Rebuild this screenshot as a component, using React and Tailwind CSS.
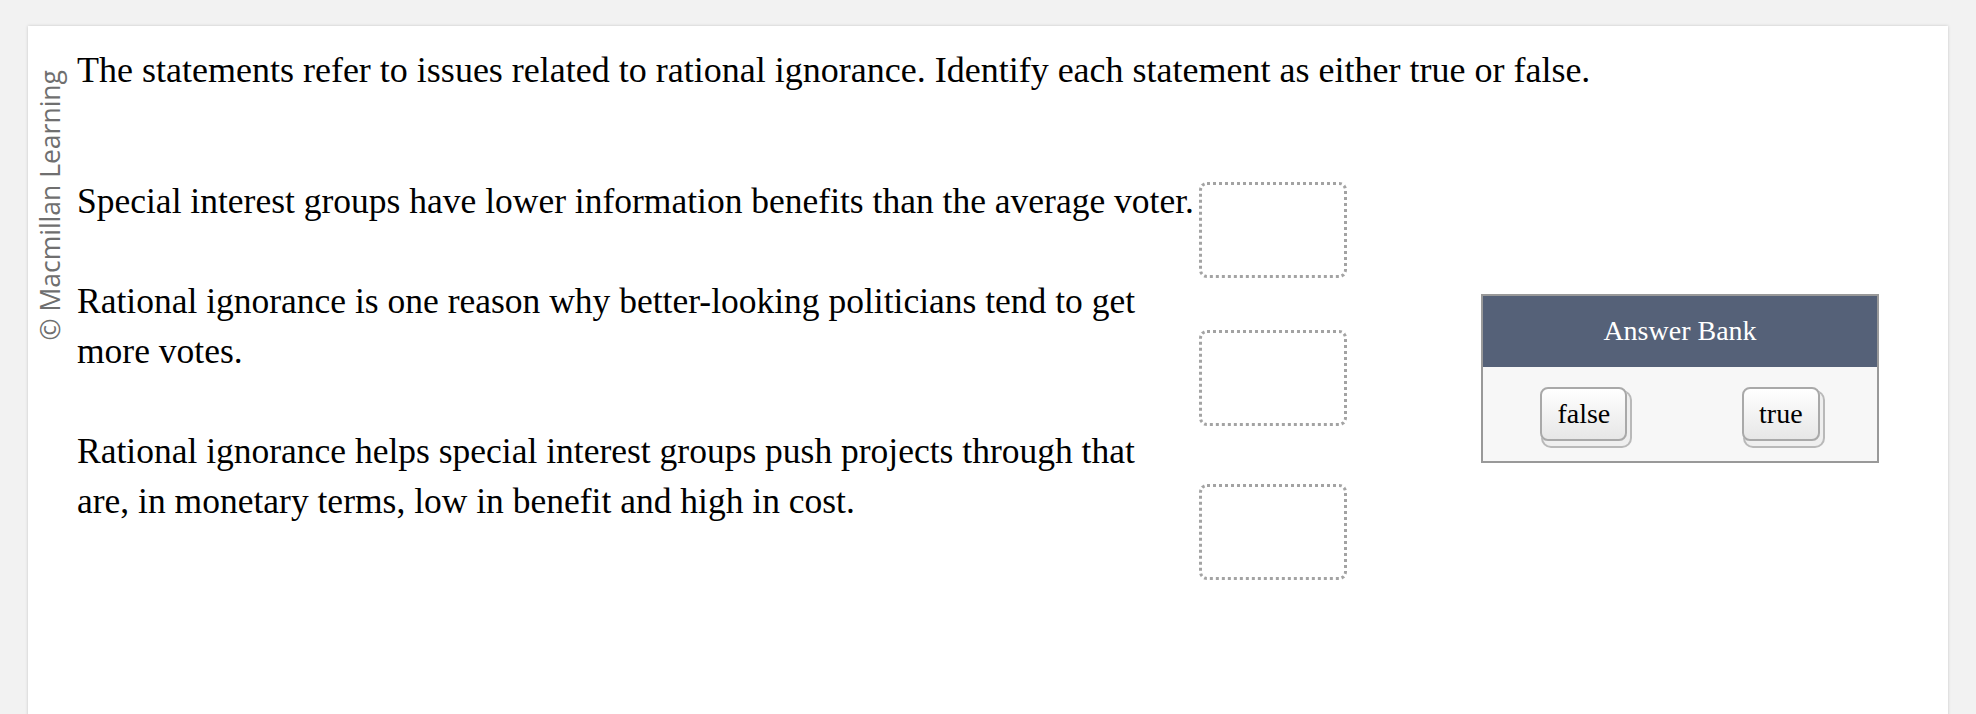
import React from 'react';

const STATEMENTS = [
  { text: 'Special interest groups have lower information benefits than the average voter.', nowrap: true },
  { text: 'Rational ignorance is one reason why better-looking politicians tend to get more votes.' },
  { text: 'Rational ignorance helps special interest groups push projects through that are, in monetary terms, low in benefit and high in cost.' },
];

const ANSWERS = ['false', 'true'];

function DropBox({ className }) {
  return (
    <div
      className={`h-[96px] w-[148px] rounded-[8px] border-[3px] border-dotted border-[#a3a3a3] bg-white ${className}`}
    />
  );
}

function AnswerChip({ label }) {
  return (
    <button
      type="button"
      className="h-[54px] px-[15px] rounded-[8px] border-2 border-[#a9a9a9] bg-linear-to-b from-white to-[#e7e7e7] text-[28px] leading-none text-black shadow-[3px_5px_0_0_#efefef,3px_5px_0_2px_#b9b9b9]"
    >
      {label}
    </button>
  );
}

function AnswerBank() {
  return (
    <div className="ml-[134px] w-[398px] shrink-0 border-2 border-[#999999] self-center">
      <div className="h-[71px] bg-[#556178] flex items-center justify-center text-white text-[28px] leading-none">
        Answer Bank
      </div>
      <div className="h-[94px] bg-[#f7f7f7] flex items-center justify-around">
        {ANSWERS.map((a) => (
          <AnswerChip key={a} label={a} />
        ))}
      </div>
    </div>
  );
}

export default function App() {
  return (
    <div
      className="h-screen w-full overflow-hidden bg-[#f2f2f2] pt-[26px] px-[28px]"
      style={{ fontFamily: '"Liberation Serif", "Times New Roman", serif' }}
    >
      <div className="flex h-[720px] bg-white shadow-[0_0_3px_rgba(0,0,0,0.18)]">
        {/* side credit */}
        <div className="w-[49px] shrink-0 pl-[8px] pt-[44px]">
          <span
            className="block [writing-mode:vertical-rl] [text-orientation:sideways] rotate-180 text-[26.5px] leading-[28px] text-[#6f6f6f] whitespace-nowrap"
            style={{ fontFamily: '"Open Sans", "Liberation Sans", sans-serif' }}
          >
            © Macmillan Learning
          </span>
        </div>

        <div className="pt-[19px] text-black">
          <p className="text-[36px] leading-[50px] whitespace-nowrap">
            The statements refer to issues related to rational ignorance. Identify each statement as either true or false.
          </p>

          <div className="mt-[81px] flex items-center">
            <div className="flex items-start">
              <div className="w-[1122px] shrink-0 flex flex-col gap-[50px] text-[35.5px] leading-[50px]">
                {STATEMENTS.map((s, i) => (
                  <p key={i} className={s.nowrap ? 'whitespace-nowrap' : 'pr-[16px]'}>
                    {s.text}
                  </p>
                ))}
              </div>
              <div className="flex flex-col w-[148px] shrink-0">
                <DropBox className="mt-[6px]" />
                <DropBox className="mt-[52px]" />
                <DropBox className="mt-[58px]" />
              </div>
            </div>
            <AnswerBank />
          </div>
        </div>
      </div>
    </div>
  );
}
